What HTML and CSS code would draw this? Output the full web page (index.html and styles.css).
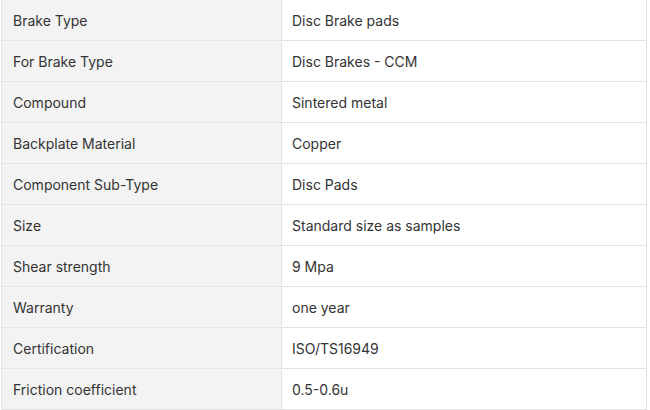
FILE: index.html
```html
<!DOCTYPE html>
<html>
<head>
<meta charset="utf-8">
<link rel="stylesheet" href="styles.css">
</head>
<body>
<table class="spec">
  <tr><td class="k">Brake Type</td><td class="v">Disc Brake pads</td></tr>
  <tr><td class="k">For Brake Type</td><td class="v">Disc Brakes - CCM</td></tr>
  <tr><td class="k">Compound</td><td class="v">Sintered metal</td></tr>
  <tr><td class="k">Backplate Material</td><td class="v">Copper</td></tr>
  <tr><td class="k">Component Sub-Type</td><td class="v">Disc Pads</td></tr>
  <tr><td class="k">Size</td><td class="v">Standard size as samples</td></tr>
  <tr><td class="k">Shear strength</td><td class="v">9 Mpa</td></tr>
  <tr><td class="k">Warranty</td><td class="v">one year</td></tr>
  <tr><td class="k">Certification</td><td class="v">ISO/TS16949</td></tr>
  <tr><td class="k">Friction coefficient</td><td class="v">0.5-0.6u</td></tr>
</table>
</body>
</html>
```
FILE: styles.css
```css
html, body {
  margin: 0;
  padding: 0;
  background: #ffffff;
}
body {
  padding-left: 1px;
  font-family: Inter, "Noto Sans", sans-serif;
  font-size: 14px;
  color: #333333;
}
.spec {
  border-collapse: collapse;
  width: 646px;
  margin-top: -1px;
}
.spec td {
  border: 1px solid #e4e4e4;
  height: 41px;
  padding: 0 0 0 11px;
  box-sizing: border-box;
  vertical-align: middle;
  line-height: 17px;
}
.spec .k {
  width: 280px;
  background: #f3f3f3;
}
.spec .v {
  background: #ffffff;
  padding-left: 10px;
}
```
